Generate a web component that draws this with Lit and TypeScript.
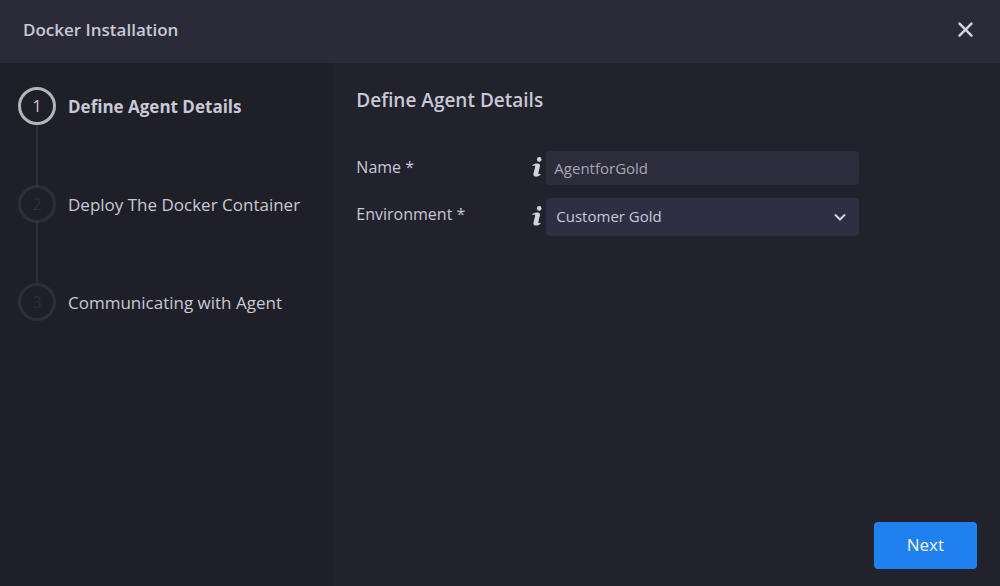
import { LitElement, html, css } from "lit";
import { customElement, state } from "lit/decorators.js";
import { classMap } from "lit/directives/class-map.js";

const STEPS = [
  "Define Agent Details",
  "Deploy The Docker Container",
  "Communicating with Agent",
];

@customElement("wizard-steps")
class WizardSteps extends LitElement {
  static properties = { current: { type: Number } };
  declare current: number;

  static styles = css`
    :host {
      display: block;
    }
    .steps {
      list-style: none;
      margin: 0;
      padding: 24px 18px;
      display: flex;
      flex-direction: column;
    }
    .step {
      display: grid;
      grid-template-columns: 38px 1fr;
      column-gap: 12px;
      align-items: center;
    }
    .marker {
      box-sizing: border-box;
      width: 38px;
      height: 38px;
      border: 3px solid #2e2c3f;
      border-radius: 50%;
      display: grid;
      place-items: center;
      font-size: 16px;
      line-height: 24px;
      color: #2e2c3f;
    }
    .label {
      padding-top: 1px;
      font-size: 17px;
      line-height: 24px;
      color: #c9c8d6;
      white-space: nowrap;
    }
    .line {
      width: 2px;
      height: 60px;
      justify-self: center;
      background: #2e2c3f;
    }
    .active .marker {
      border-color: #b4b4b9;
      color: #c9c8d6;
    }
    .active .label {
      font-weight: 700;
    }
  `;

  render() {
    return html`<ol class="steps">
      ${STEPS.map(
        (label, i) => html`<li
          class=${classMap({ step: true, active: i === this.current })}
          aria-current=${i === this.current ? "step" : "false"}
        >
          <span class="marker">${i + 1}</span>
          <span class="label">${label}</span>
          ${i < STEPS.length - 1 ? html`<span class="line"></span>` : ""}
        </li>`
      )}
    </ol>`;
  }
}

@customElement("app-root")
class AppRoot extends LitElement {
  @state() private step = 0;

  static styles = css`
    :host {
      display: flex;
      flex-direction: column;
      min-height: 100vh;
      background: #22222d;
      color: #c9c8d6;
      font-family: "Open Sans", "Noto Sans", sans-serif;
    }
    .header {
      display: flex;
      align-items: center;
      justify-content: space-between;
      padding: 15px 23px 18px;
      background: #2b2a38;
    }
    .title {
      margin: 0;
      font-size: 17px;
      line-height: 30px;
      font-weight: 600;
    }
    button {
      font-family: inherit;
      border: 0;
      padding: 0;
      background: none;
      color: inherit;
      cursor: pointer;
    }
    .close {
      display: flex;
    }
    .info {
      display: flex;
      padding-bottom: 2px;
    }
    .body {
      flex: 1;
      display: grid;
      grid-template-columns: 1fr 2fr;
    }
    .sidebar {
      background: #1f1f28;
    }
    .content {
      display: flex;
      flex-direction: column;
      justify-content: space-between;
      padding: 24px 23px 17px;
    }
    .heading {
      margin: 0 0 38px;
      font-size: 19px;
      line-height: 26px;
      font-weight: 600;
    }
    .fields {
      display: flex;
      flex-direction: column;
      gap: 13px;
    }
    .field {
      display: grid;
      grid-template-columns: 172px 10px minmax(0, 313px);
      column-gap: 4px;
      align-items: center;
    }
    .field-label {
      font-size: 16px;
      line-height: 32px;
      align-self: start;
    }
    .control {
      box-sizing: border-box;
      width: 100%;
      height: 34px;
      border: 0;
      border-radius: 4px;
      margin: 0;
      padding: 0 8px;
      font-family: inherit;
      font-size: 15px;
      color: #a7a6b3;
      background: #2d2c3c;
    }
    .picker {
      display: grid;
      align-items: center;
    }
    .picker > * {
      grid-area: 1 / 1;
    }
    .select {
      appearance: none;
      height: 38px;
      padding: 0 10px 2px;
      font-weight: 500;
      color: #c9c8d6;
      background: #2e2f43;
    }
    .chevron {
      justify-self: end;
      margin-right: 12px;
      pointer-events: none;
    }
    .actions {
      display: flex;
      justify-content: flex-end;
    }
    .next {
      padding: 10px 33px 12px;
      border-radius: 4px;
      font-size: 17px;
      line-height: 25px;
      color: #f2f6ff;
      background: #2080f0;
    }
  `;

  private infoButton(topic: string) {
    return html`<button class="info" type="button" aria-label="About ${topic}">
      <svg width="10" height="20" viewBox="0 0 10 20" fill="#d3d2df">
        <circle cx="7.200" cy="2.400" r="2.300" />
        <path
          d="M.2 8.100C1.700 7 3.500 6.400 5.400 6.400C7.600 6.400 8.300 7.400 7.900 9.200L6.400 15.800C6.200 16.800 6.400 17.200 7 17.200C7.400 17.200 7.800 17 8.300 16.700L8.600 17.800C7.400 18.900 5.800 19.600 4.200 19.600C1.900 19.600 1.100 18.400 1.500 16.700L3.100 9.900C3.300 9 3.100 8.500 2.400 8.500C1.800 8.500 1.200 8.800 .6 9.100Z"
        />
      </svg>
    </button>`;
  }

  private next() {
    this.step = Math.min(this.step + 1, STEPS.length - 1);
  }

  render() {
    return html`
      <header class="header">
        <h1 class="title">Docker Installation</h1>
        <button class="close" type="button" aria-label="Close">
          <svg width="24" height="24" viewBox="0 0 24 24" fill="none" stroke="#d3d2df" stroke-width="2.5" stroke-linecap="round">
            <path d="M6.500 5.700L18.500 17.700M18.500 5.700L6.500 17.700" />
          </svg>
        </button>
      </header>
      <div class="body">
        <nav class="sidebar" aria-label="Installation steps">
          <wizard-steps .current=${this.step}></wizard-steps>
        </nav>
        <main class="content">
          <section>
            <h2 class="heading">${STEPS[this.step]}</h2>
            <form class="fields">
              <div class="field">
                <label class="field-label" for="name">Name *</label>
                ${this.infoButton("name")}
                <input class="control" id="name" type="text" value="AgentforGold" required />
              </div>
              <div class="field">
                <label class="field-label" for="environment">Environment *</label>
                ${this.infoButton("environment")}
                <div class="picker">
                  <select class="control select" id="environment" required>
                    <option>Customer Gold</option>
                  </select>
                  <svg class="chevron" width="14" height="10" viewBox="0 0 14 10" fill="none" stroke="#d3d2df" stroke-width="2">
                    <path d="M2 2.500L7 7.500L12 2.500" />
                  </svg>
                </div>
              </div>
            </form>
          </section>
          <div class="actions">
            <button class="next" type="button" @click=${this.next}>Next</button>
          </div>
        </main>
      </div>
    `;
  }
}
